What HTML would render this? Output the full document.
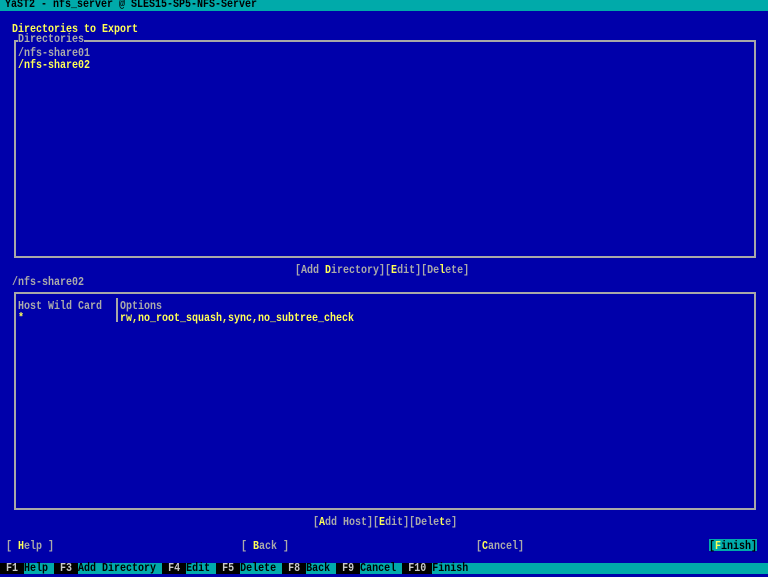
<!DOCTYPE html>
<html><head><meta charset="utf-8"><style>
html,body{margin:0;padding:0;}
body{width:768px;height:574px;background:#0000aa;position:relative;overflow:hidden;font-family:"Liberation Mono",monospace;font-size:10px;line-height:12px;font-weight:bold;color:#aaaaaa;}
.t{position:absolute;white-space:pre;transform:scaleY(1.15);transform-origin:0 50%;}
.y{color:#ffff55;}
.w{color:#c8c8c8;}
.box{position:absolute;border:2px solid #a8a8a8;box-sizing:border-box;}
.lbl{position:absolute;background:#0000aa;white-space:pre;transform:scaleY(1.15);}
.k{position:absolute;top:563px;height:11px;background:#000;}
</style></head><body>
<div style="position:absolute;left:0;top:0;width:768px;height:11px;background:#00aaaa;"></div>
<div class="t" style="left:5px;top:0px;color:#000;">YaST2 - nfs_server @ SLES15-SP5-NFS-Server</div>
<div class="t y" style="left:12px;top:25px;">Directories to Export</div>
<div class="box" style="left:14px;top:40px;width:742px;height:218px;"></div>
<div class="lbl" style="left:18px;top:35px;">Directories</div>
<div class="t" style="left:18px;top:49px;">/nfs-share01</div>
<div class="t y" style="left:18px;top:61px;">/nfs-share02</div>
<div class="t" style="left:295px;top:266px;">[Add <span class="y">D</span>irectory][<span class="y">E</span>dit][De<span class="y">l</span>ete]</div>
<div class="t" style="left:12px;top:278px;">/nfs-share02</div>
<div class="box" style="left:14px;top:292px;width:742px;height:218px;"></div>
<div style="position:absolute;left:116px;top:298px;width:2px;height:24px;background:#a8a8a8;"></div>
<div class="t" style="left:18px;top:302px;">Host Wild Card</div>
<div class="t" style="left:120px;top:302px;">Options</div>
<div class="t y" style="left:18px;top:314px;">*</div>
<div class="t y" style="left:120px;top:314px;">rw,no_root_squash,sync,no_subtree_check</div>
<div class="t" style="left:313px;top:518px;">[<span class="y">A</span>dd Host][<span class="y">E</span>dit][Dele<span class="y">t</span>e]</div>
<div class="t" style="left:6px;top:542px;">[ <span class="y">H</span>elp ]</div>
<div class="t" style="left:241px;top:542px;">[ <span class="y">B</span>ack ]</div>
<div class="t" style="left:476px;top:542px;">[<span class="y">C</span>ancel]</div>
<div style="position:absolute;left:709px;top:539px;width:48px;height:12px;background:#00aaaa;"></div>
<div class="t" style="left:709px;top:542px;color:#000;">[<span class="y">F</span>inish]</div>
<div style="position:absolute;left:0;top:563px;width:768px;height:11px;background:#00aaaa;"></div>
<div class="k" style="left:0;width:24px"></div>
<div class="k" style="left:54px;width:24px"></div>
<div class="k" style="left:162px;width:24px"></div>
<div class="k" style="left:216px;width:24px"></div>
<div class="k" style="left:282px;width:24px"></div>
<div class="k" style="left:336px;width:24px"></div>
<div class="k" style="left:402px;width:30px"></div>
<div class="t" style="left:0;top:564px;color:#000;"><span class="w"> F1 </span>Help <span class="w"> F3 </span>Add Directory <span class="w"> F4 </span>Edit <span class="w"> F5 </span>Delete <span class="w"> F8 </span>Back <span class="w"> F9 </span>Cancel <span class="w"> F10 </span>Finish</div>
</body></html>
